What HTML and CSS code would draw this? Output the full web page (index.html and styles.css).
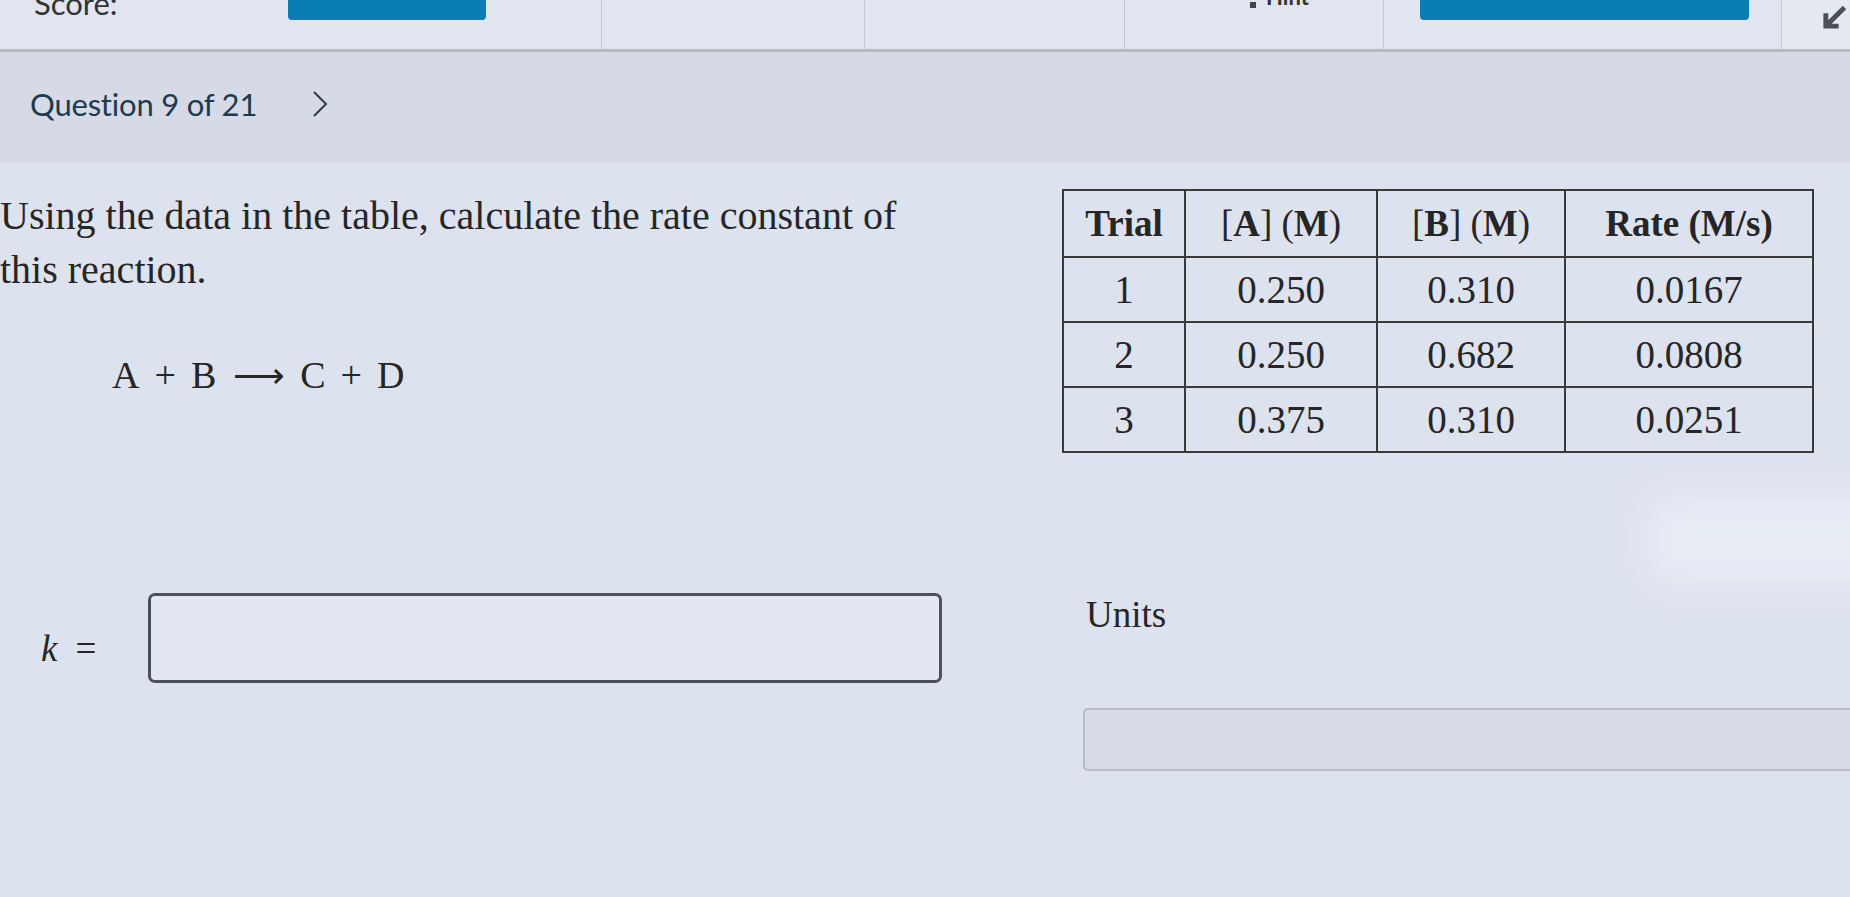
FILE: index.html
```html
<!DOCTYPE html>
<html>
<head>
<meta charset="utf-8">
<link rel="stylesheet" href="styles.css">
</head>
<body>
<div class="topbar">
  <div class="seg seg-score">
    <span class="score">Score:</span>
    <span class="btn btn-a"></span>
  </div>
  <div class="seg seg-b"></div>
  <div class="seg seg-c"></div>
  <div class="seg seg-d"><span class="hint"><span class="hint-ico"></span>Hint</span></div>
  <div class="seg seg-e"><span class="btn btn-b"></span></div>
  <div class="seg seg-f">
    <svg class="collapse" viewBox="0 0 24 24" width="28" height="28"><path d="M21 3 L7 17 M5 8 V19 H16" fill="none" stroke="#4a4f5a" stroke-width="4.2"/></svg>
  </div>
</div>
<div class="qbar">
  <span class="qnum">Question 9 of 21</span>
  <svg class="qnext" viewBox="0 0 16 28" width="16" height="28"><path d="M2 2 L14 14 L2 26" fill="none" stroke="#2a3e4e" stroke-width="2"/></svg>
</div>
<main class="content">
  <section class="problem">
    <div class="left">
      <p class="prompt">Using the data in the table, calculate the rate constant of this reaction.</p>
      <p class="reaction">A<span class="op">+</span>B<span class="arrow">&#10230;</span>C<span class="op">+</span>D</p>
    </div>
    <table class="data">
      <tr class="head"><th class="c1">Trial</th><th class="c2">[<b>A</b>] (<b>M</b>)</th><th class="c3">[<b>B</b>] (<b>M</b>)</th><th class="c4">Rate (M/s)</th></tr>
      <tr><td>1</td><td>0.250</td><td>0.310</td><td>0.0167</td></tr>
      <tr><td>2</td><td>0.250</td><td>0.682</td><td>0.0808</td></tr>
      <tr><td>3</td><td>0.375</td><td>0.310</td><td>0.0251</td></tr>
    </table>
  </section>
  <section class="answer">
    <div class="kgroup">
      <span class="klabel"><i>k</i><span class="eq">=</span></span>
      <div class="kinput"></div>
    </div>
    <div class="units">
      <span class="ulabel">Units</span>
      <div class="ubox"></div>
    </div>
  </section>
</main>
<div class="glare"></div>
</body>
</html>
```
FILE: styles.css
```css
* { box-sizing: border-box; }
html, body { margin: 0; padding: 0; }
body {
  width: 1850px;
  height: 897px;
  overflow: hidden;
  position: relative;
  background: #dde2ef;
  font-family: "Liberation Serif", "Times New Roman", serif;
  color: #222;
}
.topbar {
  display: flex;
  height: 52px;
  background: #e1e5f0;
  border-bottom: 3px solid #b7bbc6;
}
.seg {
  height: 100%;
  border-right: 1px solid #c3c7d1;
  position: relative;
  overflow: hidden;
}
.seg-score { width: 602px; display: flex; align-items: flex-start; }
.score {
  font-family: Lato, "Open Sans", sans-serif;
  font-size: 31px;
  color: #333;
  margin-left: 34px;
  margin-top: -15px;
  line-height: 36px;
}
.btn {
  display: block;
  height: 20px;
  background: #0a7db4;
  border-radius: 0 0 4px 4px;
}
.btn-a { width: 198px; margin-left: 170px; }
.seg-b { width: 263px; }
.seg-c { width: 260px; }
.seg-d { width: 259px; }
.hint {
  font-family: Lato, "Open Sans", sans-serif;
  font-size: 22px;
  color: #333;
  font-weight: bold;
  display: flex;
  align-items: flex-end;
  gap: 10px;
  margin-left: 125px;
  margin-top: -14px;
  line-height: 22px;
}
.hint-ico { width: 6px; height: 6px; background: #444; }
.seg-e { width: 398px; padding-left: 36px; }
.btn-b { width: 329px; }
.seg-f { flex: 1; border-right: none; display: flex; justify-content: flex-end; padding-top: 4px; padding-right: 2px; background: #e6e9f2; }
.qbar {
  height: 110px;
  background: #d5dae6;
  display: flex;
  align-items: center;
  padding-left: 30px;
  padding-bottom: 6px;
  font-family: Lato, "Open Sans", sans-serif;
  color: #1e3a4e;
}
.qnum { font-size: 31px; letter-spacing: -0.2px; }
.qnext { margin-left: 55px; }
.content { padding-top: 27px; }
.problem { display: flex; }
.left { width: 1062px; }
.prompt {
  margin: 0;
  width: 930px;
  font-size: 40px;
  line-height: 54px;
  color: #262626;
}
.reaction {
  margin: 56px 0 0 112px;
  font-size: 38px;
  color: #262626;
}
.op { margin: 0 15px; }
.arrow { margin: 0 15px 0 17px; font-size: 36px; }
.data {
  border-collapse: collapse;
  font-size: 39px;
  color: #262626;
  text-align: center;
}
.data th, .data td {
  border: 2px solid #3a3a3a;
  height: 65px;
  padding: 0;
}
.data th { font-weight: bold; font-size: 37px; height: 67px; }
.data th b { font-weight: bold; }
.data th.c2, .data th.c3 { font-weight: normal; }
.c1 { width: 122px; }
.c2 { width: 192px; }
.c3 { width: 188px; }
.c4 { width: 248px; }
.answer { display: flex; align-items: flex-start; margin-top: 69px; }
.kgroup { width: 1062px; display: flex; align-items: center; margin-top: 71px; }
.klabel { font-size: 37px; margin-left: 41px; width: 107px; color: #262626; padding-top: 20px; }
.eq { margin-left: 18px; }
.kinput {
  width: 794px;
  height: 90px;
  border: 3px solid #4d5058;
  border-radius: 7px;
  background: #e3e7f2;
}
.units { flex: 1; padding-left: 24px; padding-top: 73px; }
.ulabel { font-size: 37px; color: #262626; display: block; line-height: 40px; }
.ubox {
  margin-top: 73px;
  margin-left: -3px;
  height: 63px;
  background: #d6dbe6;
  border: 2px solid #b9bdc8;
  border-right: none;
  border-radius: 5px 0 0 5px;
}
.glare {
  position: absolute;
  left: 1650px;
  top: 500px;
  width: 260px;
  height: 80px;
  background: rgba(240, 242, 250, 0.7);
  filter: blur(18px);
  pointer-events: none;
}
```
